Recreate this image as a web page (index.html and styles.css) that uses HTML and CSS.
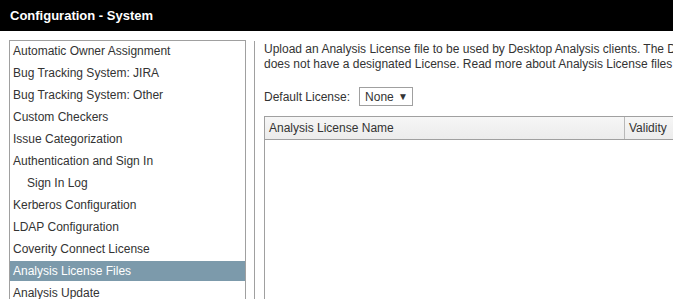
FILE: index.html
```html
<!DOCTYPE html>
<html lang="en">

<head>
    <meta charset="UTF-8">
    <meta name="viewport" content="width=device-width, initial-scale=1.0">
    <title>Configuration - System</title>
    <link rel="stylesheet" href="styles.css">
</head>

<body>
    <div class="titleBar">Configuration - System</div>
    <div class="main">
        <ul class="navList">
            <li>Automatic Owner Assignment</li>
            <li>Bug Tracking System: JIRA</li>
            <li>Bug Tracking System: Other</li>
            <li>Custom Checkers</li>
            <li>Issue Categorization</li>
            <li>Authentication and Sign In</li>
            <li class="sub">Sign In Log</li>
            <li>Kerberos Configuration</li>
            <li>LDAP Configuration</li>
            <li>Coverity Connect License</li>
            <li class="selected">Analysis License Files</li>
            <li>Analysis Update</li>
        </ul>
        <div class="content">
            <p class="intro">Upload an Analysis License file to be used by Desktop Analysis clients. The Default License is used by any client that<br>does not have a designated License. Read more about Analysis License files here.</p>
            <div class="defaultRow">
                <span>Default License:</span>
                <span class="selectBox">None <span class="arrow">&#9660;</span></span>
            </div>
            <div class="licenseTable">
                <div class="tableHead">
                    <div class="colName">Analysis License Name</div>
                    <div class="colValidity">Validity</div>
                </div>
                <div class="tableBody"></div>
            </div>
        </div>
    </div>
</body>
</html>
```

FILE: styles.css
```css
* {
  margin: 0;
  padding: 0;
  box-sizing: border-box;
}

html, body {
  width: 673px;
  height: 299px;
  overflow: hidden;
  background: #ffffff;
  font-family: "Liberation Sans", Arial, sans-serif;
  font-size: 12px;
  color: #333333;
}

.titleBar {
  height: 31px;
  line-height: 31px;
  background: #000000;
  color: #ffffff;
  font-size: 13px;
  font-weight: bold;
  padding-left: 10px;
}

.main {
  display: flex;
  padding: 9px 0 0 9px;
  width: 1000px;
}

.navList {
  list-style: none;
  width: 237px;
  height: 400px;
  border: 1px solid #a0a0a0;
  flex-shrink: 0;
}

.navList li {
  height: 22px;
  line-height: 20px;
  padding: 0 0 2px 3px;
  white-space: nowrap;
}

.navList li.sub {
  padding-left: 17px;
}

.navList li.selected {
  background: #7c9aab;
  color: #ffffff;
  padding-bottom: 0;
  margin-bottom: 2px;
  height: 20px;
}

.content {
  margin: 1px 0 0 8px;
  border-left: 1px solid #a0a0a0;
  padding: 1px 0 0 9px;
  flex: 1;
}

.intro {
  line-height: 15px;
  white-space: nowrap;
}

.defaultRow {
  display: flex;
  align-items: center;
  gap: 9px;
  margin-top: 15px;
  height: 19px;
}

.selectBox {
  display: inline-block;
  height: 19px;
  line-height: 17px;
  border: 1px solid #a0a0a0;
  padding: 0 4px 0 5px;
}

.arrow {
  font-size: 10px;
  vertical-align: 1px;
  margin-left: 1px;
}

.licenseTable {
  margin-top: 10px;
  border: 1px solid #a0a0a0;
  width: 700px;
  height: 300px;
}

.tableHead {
  display: flex;
  height: 23px;
  line-height: 22px;
  background: linear-gradient(#f6f6f6, #ececec);
  border-bottom: 1px solid #a0a0a0;
}

.colName {
  width: 360px;
  padding-left: 4px;
  border-right: 1px solid #b8b8b8;
}

.colValidity {
  padding-left: 4px;
}
```
